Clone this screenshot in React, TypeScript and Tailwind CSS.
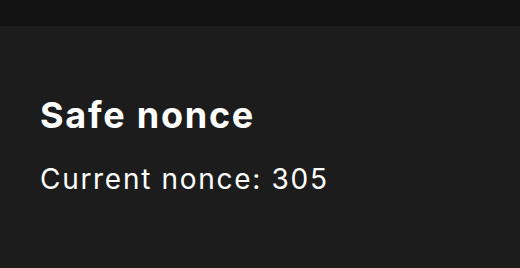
export default function App() {
  return (
    <div className="w-[520px] h-[268px] bg-[#1c1c1c] flex flex-col" style={{ fontFamily: 'Inter, "Noto Sans", sans-serif' }}>
      <div className="h-[26px] bg-[#121212]" />
      <div className="px-[40px] pt-[69px] text-white">
        <h2 className="text-[36px] leading-[40px] font-bold tracking-[1.75px]">Safe nonce</h2>
        <p className="mt-[28px] text-[28px] leading-[32px] font-normal tracking-[1.7px]">Current nonce: 305</p>
      </div>
    </div>
  );
}
